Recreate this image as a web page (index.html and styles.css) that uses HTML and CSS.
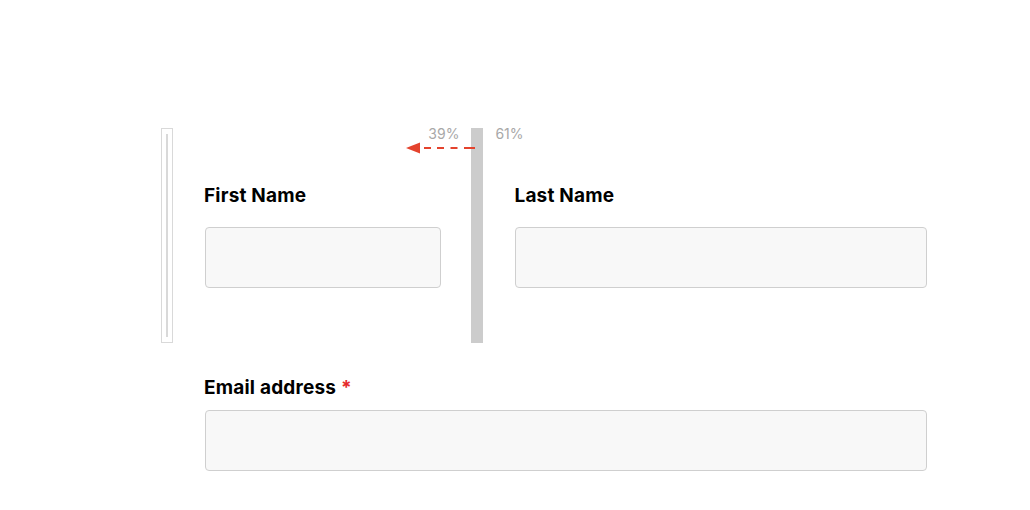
FILE: index.html
```html
<!DOCTYPE html>
<html>
  <head>
    <meta charset="utf-8" />
    <link rel="stylesheet" href="styles.css">
  </head>

  <body>
    <form class="form-preview">
      <div class="field-row">
        <div class="row-handle"><span></span></div>

        <div class="field-col col-first" style="width: 39%">
          <label class="field-label">First Name</label>
          <input class="field-input" type="text" />
        </div>

        <div class="field-col col-last" style="width: 61%">
          <label class="field-label">Last Name</label>
          <input class="field-input" type="text" />
        </div>

        <div class="col-resizer" style="left: 39%">
          <span class="resizer-pct pct-left">39%</span>
          <span class="resizer-pct pct-right">61%</span>
          <svg class="resizer-arrow" width="70" height="12" viewBox="0 0 70 12">
            <polygon points="1,6 15,0.5 15,11.5" fill="#e4432d" />
            <path d="M19 6h7M32 6h7M45.5 6h7M59 6h11" stroke="#e4432d" stroke-width="2.2" fill="none" />
          </svg>
        </div>
      </div>

      <div class="field-single">
        <label class="field-label">Email address <span class="required">*</span></label>
        <input class="field-input" type="email" />
      </div>
    </form>
  </body>
</html>
```

FILE: styles.css
```css
* {
  box-sizing: border-box;
}

body {
  margin: 0;
  background-color: #fff;
  font-family: Inter, "Noto Sans", sans-serif;
  color: #000;
}

.form-preview {
  width: 796px;
  margin: 128px 0 0 161px;
}

.field-row {
  position: relative;
  display: flex;
  height: 215px;
}

.row-handle {
  position: absolute;
  top: 0;
  bottom: 0;
  left: 0;
  width: 12px;
  border: 1px solid #d9d9d9;
  display: flex;
  justify-content: center;
  padding: 5px 0;
}

.row-handle span {
  width: 2px;
  background-color: #d9d9d9;
}

.field-col {
  padding: 56px 30px 0 43px;
}

.field-label {
  display: block;
  font-size: 19px;
  line-height: 23px;
  font-weight: 700;
  letter-spacing: 0.2px;
  margin-bottom: 20px;
}

.required {
  color: #e52a2a;
}

.field-input {
  display: block;
  width: calc(100% - 1px);
  height: 61px;
  margin: 0 0 0 1px;
  border: 1px solid #cfcfcf;
  border-radius: 4px;
  background-color: #f8f8f8;
  outline: none;
}

.col-resizer {
  position: absolute;
  top: 0;
  bottom: 0;
  width: 12px;
  background-color: #cccccc;
}

.resizer-pct {
  position: absolute;
  top: -3px;
  font-size: 14px;
  line-height: 17px;
  color: #a8a8a8;
}

.pct-left {
  right: 24px;
}

.pct-right {
  left: 24px;
}

.resizer-arrow {
  position: absolute;
  top: 14px;
  left: -66px;
}

.field-single {
  padding: 33px 30px 0 43px;
}

.field-single .field-label {
  margin-bottom: 11px;
}
```
